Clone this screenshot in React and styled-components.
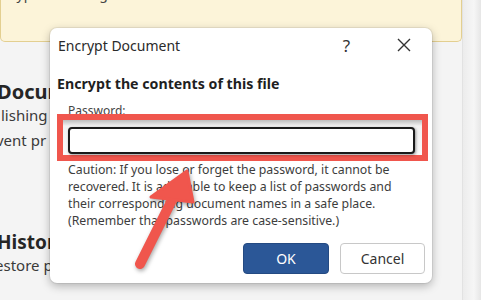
import React from "react";
import styled, { createGlobalStyle } from "styled-components";

const Global = createGlobalStyle`
  html, body { margin: 0; padding: 0; }
  body { font-family: "Noto Sans", "Open Sans", sans-serif; background: #f3f3f3; }
`;

const Page = styled.div`
  position: relative;
  width: 481px;
  height: 300px;
  overflow: hidden;
  background: #f4f4f4;
  display: flex;
`;

const Main = styled.div`
  flex: 1;
  display: flex;
  flex-direction: column;
  overflow: hidden;
`;

const Banner = styled.div`
  height: 44px;
  margin-top: -2px;
  background: #fcf4d9;
  border: 1px solid #e3cf90;
  border-top: none;
  border-radius: 0 0 5px 5px;
  font-size: 14px;
  color: #444;
  line-height: 1;
  padding: 0 0 0 8px;
  box-sizing: border-box;
  span { display: block; margin-top: -11px; }
`;

const Side = styled.div`
  display: flex;
  flex-direction: column;
  margin-left: -3px;
`;

const SideHead = styled.div`
  font-size: ${(p) => p.$size}px;
  font-weight: 700;
  color: #262626;
  margin-top: ${(p) => p.$top}px;
  line-height: 22px;
  white-space: nowrap;
`;

const SideLine = styled.div`
  font-size: 15px;
  color: #3a3a3a;
  line-height: 25px;
  white-space: nowrap;
  margin-left: ${(p) => p.$shift || 0}px;
`;

const RightStrip = styled.div`
  width: 18px;
  background: linear-gradient(90deg, #ececec, #f6f6f6 60%, #e6e6e6);
  border-left: 1px solid #e2e2e2;
`;

const Dialog = styled.div`
  position: absolute;
  left: 50px;
  top: 28px;
  width: 382px;
  height: 255px;
  background: #fff;
  border-radius: 7px;
  box-shadow: 0 3px 10px rgba(0, 0, 0, 0.28), 0 0 0 1px rgba(0, 0, 0, 0.06);
  display: flex;
  flex-direction: column;
  box-sizing: border-box;
  color: #1f1f1f;
`;

const TitleBar = styled.div`
  height: 34px;
  display: flex;
  align-items: center;
  padding-left: 8px;
  font-size: 14px;
  color: #2a2a2a;
`;

const Title = styled.div`
  flex: 1;
`;

const TitleBtn = styled.div`
  width: 57px;
  display: flex;
  justify-content: center;
  align-items: center;
  font-size: 17px;
  color: #333;
`;

const Heading = styled.div`
  margin: 11px 0 0 7px;
  font-size: 14.2px;
  font-weight: 700;
  line-height: 22px;
`;

const Label = styled.div`
  margin: 9px 0 0 18px;
  font-size: 12px;
  color: #444;
  line-height: 14px;
`;

const Highlight = styled.div`
  position: relative;
  margin: -4px 4px 0 7px;
  height: 47px;
  box-sizing: border-box;
  border: 6px solid #f0564d;
  padding: 7px 7px 1px 5px;
  background: linear-gradient(#bdbdbd, #f2f2f2 6px, #fafafa);
  display: flex;
`;

const Input = styled.div`
  flex: 1;
  height: 27px;
  box-sizing: border-box;
  border: 2px solid #1a1a1a;
  border-radius: 4px;
  background: #fff;
  box-shadow: 1px 1px 3px rgba(0, 0, 0, 0.4);
`;

const Caution = styled.p`
  margin: 0 0 0 18px;
  font-size: 12.3px;
  line-height: 17px;
  color: #3d3d3d;
  white-space: nowrap;
`;

const Buttons = styled.div`
  margin-top: auto;
  margin-bottom: 9px;
  display: flex;
  justify-content: flex-end;
  gap: 11px;
  padding-right: 7px;
`;

const Button = styled.div`
  width: ${(p) => p.$w}px;
  height: 31px;
  box-sizing: border-box;
  border-radius: 4px;
  display: flex;
  align-items: center;
  justify-content: center;
  font-size: 14px;
  background: ${(p) => (p.$primary ? "#2b5797" : "#fff")};
  color: ${(p) => (p.$primary ? "#fff" : "#333")};
  border: 1px solid ${(p) => (p.$primary ? "#244a82" : "#c8c8c8")};
`;

const Arrow = styled.svg`
  position: absolute;
  left: 0;
  top: 0;
  pointer-events: none;
  filter: drop-shadow(1px 2px 2px rgba(0, 0, 0, 0.35));
`;

export default function App() {
  return (
    <>
      <Global />
      <Page>
        <Main>
          <Banner>
            <span>Types of changes are restricted in this document.</span>
          </Banner>
          <Side>
            <SideHead $size={20} $top={39}>Document</SideHead>
            <SideLine $shift={4}>lishing this file</SideLine>
            <SideLine $shift={-1}>vent pr</SideLine>
            <SideHead $size={19} $top={78}>History</SideHead>
            <SideLine $shift={-2}>estore previous versions</SideLine>
          </Side>
        </Main>
        <RightStrip />

        <Dialog>
          <TitleBar>
            <Title>Encrypt Document</Title>
            <TitleBtn>?</TitleBtn>
            <TitleBtn>
              <svg width="14" height="14" viewBox="0 0 14 14">
                <path d="M1 1 L13 13 M13 1 L1 13" stroke="#333" strokeWidth="1.4" />
              </svg>
            </TitleBtn>
          </TitleBar>
          <Heading>Encrypt the contents of this file</Heading>
          <Label>Password:</Label>
          <Highlight>
            <Input />
          </Highlight>
          <Caution>
            Caution: If you lose or forget the password, it cannot be
            <br />
            recovered. It is advisable to keep a list of passwords and
            <br />
            their corresponding document names in a safe place.
            <br />
            (Remember that passwords are case-sensitive.)
          </Caution>
          <Buttons>
            <Button $primary $w={86}>OK</Button>
            <Button $w={85}>Cancel</Button>
          </Buttons>
        </Dialog>

        <Arrow width="481" height="300" viewBox="0 0 481 300">
          <line x1="140" y1="264" x2="172" y2="200" stroke="#f0564d" strokeWidth="10" strokeLinecap="round" />
          <path d="M187 171 L151 197 L193 202 Z" fill="#f0564d" stroke="#f0564d" strokeWidth="3" strokeLinejoin="round" />
        </Arrow>
      </Page>
    </>
  );
}
